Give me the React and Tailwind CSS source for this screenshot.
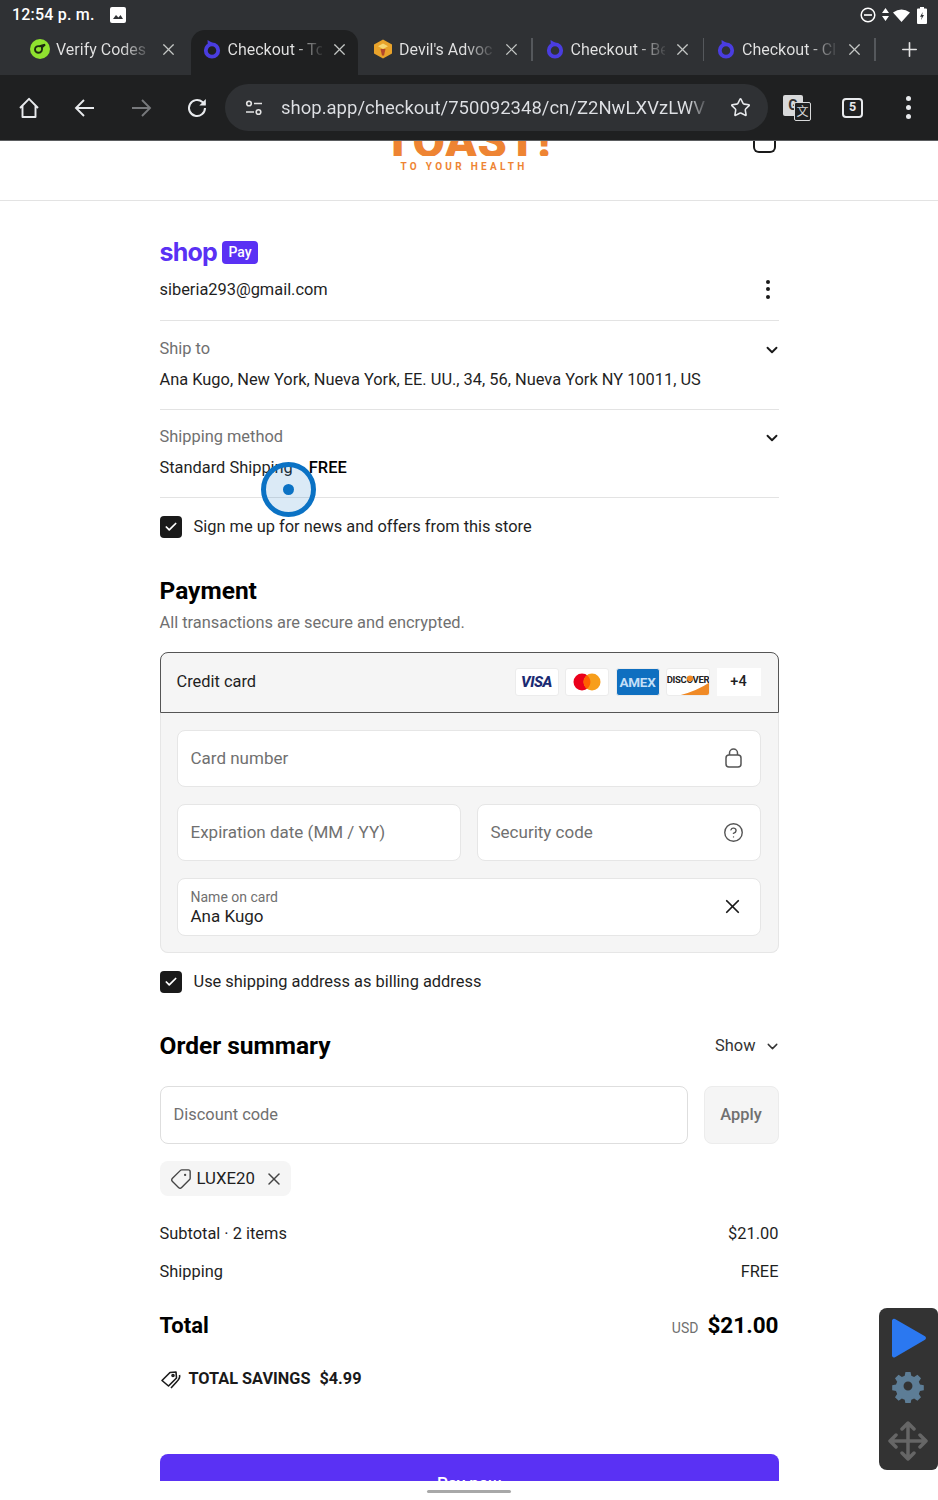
import { Check, ChevronDown, CircleHelp, Plus, Star, Tag, X } from 'lucide-react'

const tabs = [
  { title: 'Verify Codes', icon: 'verify' },
  { title: 'Checkout - To', icon: 'shop', active: true },
  { title: "Devil's Advoc", icon: 'devil' },
  { title: 'Checkout - Be', icon: 'shop', divider: true },
  { title: 'Checkout - Cl', icon: 'shop', divider: true },
]

function TabIcon({ type }) {
  if (type === 'verify') {
    return (
      <svg width="20" height="20" viewBox="0 0 20 20">
        <circle cx="10" cy="10" r="10" fill="#8fe22f" />
        <path d="M5 10.500c0-2.500 2-3.800 4.500-3.300l5.500-1.600-3.200 3c1 2-.4 5.200-3.300 5.200C6.500 13.800 5 12.400 5 10.500z" fill="none" stroke="#1c2a10" strokeWidth="1.900" />
      </svg>
    )
  }
  if (type === 'devil') {
    return (
      <svg width="20" height="20" viewBox="0 0 20 20">
        <path d="M10 .5l9 5v9l-9 5-9-5v-9z" fill="#e9a32b" />
        <path d="M10 4.500l5 2.800-5 2.800-5-2.800z" fill="#f7d774" />
        <path d="M7.500 10h5l-1.500 6.500H9z" fill="#b4472a" />
      </svg>
    )
  }
  return (
    <svg width="18" height="20" viewBox="0 0 18 20">
      <circle cx="9" cy="11.500" r="6.200" fill="none" stroke="#4a3de0" strokeWidth="3.800" />
      <path d="M4.500 1l6 3.500-5.500 4z" fill="#4a3de0" />
    </svg>
  )
}

function Tab({ tab }) {
  return (
    <div className="relative flex h-[45px] w-[171.500px] shrink-0 items-center pb-[7px] pl-[11px]">
      {tab.active && <div className="absolute bottom-0 left-0 right-[4.500px] top-0 rounded-t-[14px] bg-[#1f2021]" />}
      {tab.divider && <div className="absolute left-[-2.500px] top-[8px] h-[23px] w-[1.500px] bg-[#55585c]" />}
      <div className="relative flex w-[20px] justify-center">
        <TabIcon type={tab.icon} />
      </div>
      <div className="relative ml-[6px] mt-[2px] w-[94px] overflow-hidden whitespace-nowrap bg-gradient-to-r from-[#e3e3e3] from-[70%] to-[#e3e3e3]/10 bg-clip-text text-[16px] text-transparent">
        {tab.title}
      </div>
      <X size={19} strokeWidth={1.500} className="relative ml-[8.500px] text-[#c4c7c5]" />
    </div>
  )
}

function BrowserChrome() {
  return (
    <div className="bg-[#2f3134]">
      <div className="flex h-[30px] items-center justify-between pl-[12px] pr-[11px] text-white">
        <div className="flex items-center gap-[15px]">
          <span className="text-[16px] font-medium tracking-[0.2px]">12:54 p. m.</span>
          <svg width="16" height="16" viewBox="0 0 16 16">
            <rect width="16" height="16" rx="2" fill="#fff" />
            <path d="M3 12l3-4 2.500 2.500L10.500 8l2.500 4z" fill="#2f3134" />
          </svg>
        </div>
        <div className="flex items-center gap-[5px]">
          <svg width="16" height="16" viewBox="0 0 16 16" className="mr-[1px]">
            <circle cx="8" cy="8" r="6.800" fill="none" stroke="#fff" strokeWidth="1.500" />
            <rect x="4" y="7.200" width="8" height="1.600" fill="#fff" />
          </svg>
          <svg width="7" height="14" viewBox="0 0 7 14" className="-mr-[1px]">
            <path d="M3.500 0L7 5H0zM0 8h7l-3.500 5z" fill="#fff" />
          </svg>
          <svg width="17" height="13" viewBox="0 0 17 13">
            <path d="M0 3.500Q8.500-2.500 17 3.500L8.500 13z" fill="#fff" />
          </svg>
          <svg width="10" height="17" viewBox="0 0 10 17" className="ml-[2px]">
            <path d="M3 0h4v1.500h2a1 1 0 0 1 1 1V16a1 1 0 0 1-1 1H1a1 1 0 0 1-1-1V2.500a1 1 0 0 1 1-1h2z" fill="#fff" />
            <path d="M5.800 5L3 9.800h1.800L4 13l3-5H5.200z" fill="#2f3134" />
          </svg>
        </div>
      </div>
      <div className="flex h-[45px] pl-[19px]">
        {tabs.map((t) => (
          <Tab key={t.title} tab={t} />
        ))}
        <div className="relative w-[61px]">
          <div className="absolute left-[-2.500px] top-[8px] h-[23px] w-[1.500px] bg-[#55585c]" />
          <Plus size={23} strokeWidth={1.700} className="absolute left-[21px] top-[8px] text-[#e3e3e3]" />
        </div>
      </div>
      <div className="flex h-[66px] items-center border-b border-[#5b5d60] bg-[#1f2021]">
        <div className="flex w-[225px] items-center pl-[17px] text-[#e8eaed]">
          <svg width="24" height="24" viewBox="0 0 24 24" fill="none" stroke="currentColor" strokeWidth="1.900">
            <path d="M3 12L12 2.800 21 12M5.500 10v11h13V10" strokeLinejoin="round" />
          </svg>
          <svg width="24" height="24" viewBox="0 0 24 24" fill="none" stroke="currentColor" strokeWidth="1.900" className="ml-[32px]">
            <path d="M21 12H3.500M11 4l-8 8 8 8" />
          </svg>
          <svg width="24" height="24" viewBox="0 0 24 24" fill="none" stroke="#77797c" strokeWidth="1.900" className="ml-[32px]">
            <path d="M3 12h17.500M13 4l8 8-8 8" />
          </svg>
          <svg width="24" height="24" viewBox="0 0 24 24" fill="none" stroke="currentColor" strokeWidth="2" className="ml-[32px]">
            <path d="M20 12a8 8 0 1 1-2.600-5.900L20 8.500" />
            <path d="M20.800 3v6.500h-6.500z" fill="currentColor" stroke="none" />
          </svg>
        </div>
        <div className="flex h-[47px] w-[543px] items-center rounded-full bg-[#2f3134] pl-[20px]">
          <svg width="18" height="16" viewBox="0 0 18 16" fill="none" stroke="#e3e3e3" strokeWidth="1.600">
            <circle cx="4" cy="3.500" r="2.300" />
            <path d="M9 3.500h8M1 12h8" />
            <circle cx="13.500" cy="12" r="2.300" />
          </svg>
          <div className="ml-[18px] mt-[2px] w-[424px] overflow-hidden whitespace-nowrap bg-gradient-to-r from-[#dfe1e5] from-[96%] to-[#dfe1e5]/20 bg-clip-text text-[18.500px] text-transparent">
            shop.app/checkout/750092348/cn/Z2NwLXVzLWV
          </div>
          <Star size={21} strokeWidth={1.800} className="ml-[25px] text-[#e8eaed]" />
        </div>
        <div className="relative ml-[15px] h-[26px] w-[28px]">
          <div className="absolute left-0 top-0 flex h-[21px] w-[20px] items-center justify-center rounded-[2px] bg-[#d8d9da] text-[14px] font-bold text-[#333]">G</div>
          <div className="absolute bottom-0 right-0 flex h-[19px] w-[17px] items-center justify-center rounded-[2px] border border-[#d8d9da] bg-[#1f2021] font-['Noto_Sans_CJK_SC',sans-serif] text-[12px] leading-none text-[#d8d9da]">文</div>
        </div>
        <div className="ml-[31px] flex h-[20px] w-[21px] items-center justify-center rounded-[4px] border-2 border-[#e8eaed] text-[12.500px] font-bold text-[#e8eaed]">5</div>
        <div className="ml-[43px] flex flex-col gap-[4px]">
          <div className="size-[5px] rounded-full bg-[#e8eaed]" />
          <div className="size-[5px] rounded-full bg-[#e8eaed]" />
          <div className="size-[5px] rounded-full bg-[#e8eaed]" />
        </div>
      </div>
    </div>
  )
}

function Checkbox({ label }) {
  return (
    <div className="flex items-center gap-[12px]">
      <div className="flex size-[22px] items-center justify-center rounded-[4px] bg-[#1a1a1a]">
        <Check size={14} strokeWidth={3} className="text-white" />
      </div>
      <span className="text-[16.400px] text-[#1f1f1f]">{label}</span>
    </div>
  )
}

function CardLogo({ children, className = '' }) {
  return <div className={`flex h-[28px] w-[44px] items-center justify-center overflow-hidden rounded-[3px] border border-[#ececec] ${className}`}>{children}</div>
}

function CardLogos() {
  return (
    <div className="flex gap-[6.500px]">
      <CardLogo className="bg-white">
        <span className="text-[15px] font-extrabold italic tracking-[-0.5px] text-[#1a2a72]">VISA</span>
      </CardLogo>
      <CardLogo className="bg-white">
        <svg width="28" height="18" viewBox="0 0 28 18">
          <circle cx="9" cy="9" r="8.500" fill="#eb001b" />
          <circle cx="19" cy="9" r="8.500" fill="#f79e1b" />
          <path d="M14 2.200a8.500 8.500 0 0 1 0 13.600 8.500 8.500 0 0 1 0-13.600z" fill="#ff5f00" />
        </svg>
      </CardLogo>
      <CardLogo className="border-[#0f6fc0] bg-[#0f6fc0]">
        <span className="text-[13.500px] font-bold tracking-[-0.3px] text-[#c4dff7]">AMEX</span>
      </CardLogo>
      <CardLogo className="relative items-start bg-white">
        <span className="mt-[4px] text-[9.500px] font-bold tracking-[-0.3px] text-[#222]">DISCOVER</span>
        <svg width="44" height="28" viewBox="0 0 44 28" className="absolute inset-0">
          <path d="M10 27Q30 22 43 13V27z" fill="#f08a26" />
          <circle cx="23" cy="9.500" r="3" fill="#f08a26" />
        </svg>
      </CardLogo>
      <div className="flex h-[28px] w-[44px] items-center justify-center bg-white text-[14.500px] font-medium text-[#1f1f1f]">+4</div>
    </div>
  )
}

function Field({ label, children, className = '' }) {
  return (
    <div className={`flex h-[57px] items-center justify-between rounded-[8px] border border-[#e6e6e6] bg-white pl-[13px] pr-[16px] text-[17px] text-[#707070] ${className}`}>
      <span className="pt-[2px]">{label}</span>
      {children}
    </div>
  )
}

function Row({ left, right }) {
  return (
    <div className="flex items-center justify-between text-[16.400px] text-[#1f1f1f]">
      <span>{left}</span>
      <span>{right}</span>
    </div>
  )
}

export default function App() {
  return (
    <div className="relative h-[1500px] w-[938px] overflow-hidden bg-white font-['Roboto',sans-serif]">
      <BrowserChrome />

      {/* store header, scrolled off the top */}
      <div className="h-[60px] overflow-hidden border-b border-[#e3e3e3]">
        <div className="mx-auto flex h-[59px] w-[619px] items-end justify-between">
          <div className="w-[22px]" />
          <div className="flex flex-col items-center pb-[28px]">
            <div className="h-[15px] overflow-hidden">
              <div className="-mt-[20px] text-[47px] font-black leading-[40px] tracking-[0.5px] text-[#ee8433]">TOAST!</div>
            </div>
            <div className="mr-[6px] mt-[5px] text-[10px] font-bold leading-[11px] tracking-[3.300px] text-[#ee8433]">TO YOUR HEALTH</div>
          </div>
          <div className="mb-[47px] mr-[3px] h-[12px] w-[23px] rounded-b-[6px] border-2 border-t-0 border-[#1a1a1a]" />
        </div>
      </div>

      <div className="mx-auto w-[619px]">
        <div className="mt-[35px] flex h-[32px] items-center gap-[5px]">
          <span className="font-['Inter',sans-serif] text-[25px] font-bold leading-none tracking-[-0.8px] text-[#5a31f4]">shop</span>
          <span className="mt-[1px] flex h-[23px] w-[36px] items-center justify-center rounded-[4px] bg-[#5a31f4] text-[14px] font-medium text-white">Pay</span>
        </div>

        <div className="mt-[7px] flex h-[30px] items-center justify-between text-[16.400px] text-[#1f1f1f]">
          <span>siberia293@gmail.com</span>
          <div className="-mt-[2px] mr-[9px] flex flex-col gap-[3.500px]">
            <div className="size-[4px] rounded-full bg-[#1a1a1a]" />
            <div className="size-[4px] rounded-full bg-[#1a1a1a]" />
            <div className="size-[4px] rounded-full bg-[#1a1a1a]" />
          </div>
        </div>

        <div className="mt-[15px] border-t border-[#e3e3e3]">
          <div className="mt-[18px] flex h-[20px] items-center justify-between text-[16.400px] text-[#707070]">
            <span>Ship to</span>
            <ChevronDown size={18} strokeWidth={2.500} className="-mr-[2.500px] mt-[2px] text-[#1a1a1a]" />
          </div>
          <div className="mt-[11px] text-[16.400px] leading-[20px] text-[#1f1f1f]">
            Ana Kugo, New York, Nueva York, EE. UU., 34, 56, Nueva York NY 10011, US
          </div>
        </div>

        <div className="mt-[19px] border-t border-[#e3e3e3]">
          <div className="mt-[17px] flex h-[20px] items-center justify-between text-[16.400px] text-[#707070]">
            <span>Shipping method</span>
            <ChevronDown size={18} strokeWidth={2.500} className="-mr-[2.500px] mt-[2px] text-[#1a1a1a]" />
          </div>
          <div className="mt-[11px] flex gap-[16px] text-[16.400px] leading-[20px] text-[#1f1f1f]">
            <span>Standard Shipping</span>
            <span className="font-medium text-black">FREE</span>
          </div>
        </div>

        <div className="mt-[19px] border-t border-[#e3e3e3] pt-[17px]">
          <Checkbox label="Sign me up for news and offers from this store" />
        </div>

        <h2 className="mt-[36px] text-[24.500px] font-bold leading-[30px] text-black">Payment</h2>
        <p className="mt-[7px] text-[16.400px] leading-[20px] text-[#707070]">All transactions are secure and encrypted.</p>

        <div className="mt-[19px] rounded-[8px] bg-[#f5f5f5]">
          <div className="flex h-[61px] items-center justify-between rounded-t-[8px] border border-[#555] pl-[16px] pr-[17px]">
            <span className="text-[16.400px] text-[#1f1f1f]">Credit card</span>
            <CardLogos />
          </div>
          <div className="flex flex-col gap-[17px] rounded-b-[8px] border border-t-0 border-[#e6e6e6] pb-[16px] pl-[16px] pr-[17px] pt-[17px]">
            <Field label="Card number">
              <svg width="17" height="20" viewBox="0 0 17 20" fill="none" stroke="#555" strokeWidth="1.500" className="mr-[2px]">
                <rect x="1" y="7" width="15" height="12" rx="3" />
                <path d="M4.500 7V5a4 4 0 0 1 8 0v2" />
              </svg>
            </Field>
            <div className="flex gap-[16px]">
              <Field label="Expiration date (MM / YY)" className="flex-1" />
              <Field label="Security code" className="flex-1">
                <CircleHelp size={21} strokeWidth={1.600} className="text-[#555]" />
              </Field>
            </div>
            <div className="flex h-[58px] items-center justify-between rounded-[8px] border border-[#e6e6e6] bg-white pl-[13px] pr-[16px]">
              <div className="pt-[1px]">
                <div className="text-[14px] leading-[16px] text-[#707070]">Name on card</div>
                <div className="mt-[1px] text-[17px] leading-[20px] text-[#1f1f1f]">Ana Kugo</div>
              </div>
              <X size={23} strokeWidth={1.800} className="text-[#1a1a1a]" />
            </div>
          </div>
        </div>

        <div className="mt-[17px]">
          <Checkbox label="Use shipping address as billing address" />
        </div>

        <div className="mt-[37px] flex h-[30px] items-center justify-between">
          <h2 className="text-[24.500px] font-bold text-black">Order summary</h2>
          <div className="flex items-center gap-[8px] text-[16.400px] text-[#333]">
            Show
            <ChevronDown size={17} strokeWidth={2} className="-mr-[2px] text-[#333]" />
          </div>
        </div>

        <div className="mt-[25px] flex gap-[16px]">
          <div className="flex h-[58px] flex-1 items-center rounded-[8px] border border-[#dedede] pl-[13px] text-[16.400px] text-[#707070]">Discount code</div>
          <div className="flex h-[58px] w-[75px] items-center justify-center rounded-[8px] border border-[#ececec] bg-[#f5f5f5] text-[16.400px] font-medium text-[#707070]">Apply</div>
        </div>

        <div className="mt-[17px] flex h-[35px] w-[131px] items-center rounded-[8px] bg-[#f5f5f5] pl-[10px] text-[16.800px] text-[#1f1f1f]">
          <Tag size={22} strokeWidth={1.500} className="-scale-x-100 text-[#444]" />
          <span className="ml-[5px]">LUXE20</span>
          <X size={20} strokeWidth={1.800} className="ml-[9px] text-[#444]" />
        </div>

        <div className="mt-[26px]">
          <Row left="Subtotal · 2 items" right="$21.00" />
        </div>
        <div className="mt-[13px]">
          <Row left="Shipping" right="FREE" />
        </div>

        <div className="mt-[26px] flex h-[30px] items-center justify-between">
          <span className="text-[22px] font-bold text-black">Total</span>
          <div className="flex items-baseline gap-[9px]">
            <span className="text-[14px] text-[#707070]">USD</span>
            <span className="text-[22.500px] font-bold text-black">$21.00</span>
          </div>
        </div>

        <div className="mt-[27px] flex items-center text-[16.300px] font-bold text-[#1a1a1a]">
          <svg width="22" height="20" viewBox="0 0 22 20" fill="none" stroke="#1a1a1a" strokeWidth="1.600" strokeLinejoin="round">
            <path d="M2 10.500L10 2.500l6-.5.500 6-8 8z" />
            <circle cx="13" cy="5.500" r="1" />
            <path d="M19.500 5c1 3-1 5-3 7l-5.500 6" />
          </svg>
          <span className="ml-[7px]">TOTAL SAVINGS</span>
          <span className="ml-[9px]">$4.99</span>
        </div>

        <div className="mt-[62px] h-[27px] overflow-hidden rounded-t-[8px] bg-[#5a31f4] pt-[19px] text-center text-[17px] font-medium leading-[20px] text-white">Pay now</div>
      </div>

      <div className="mx-auto mt-[9px] h-[3px] w-[84px] rounded-full bg-[#a8a8a8]" />

      {/* touch indicator */}
      <div className="absolute left-[261px] top-[462px] flex size-[55px] items-center justify-center rounded-full border-[5px] border-[#0b72c4] bg-[#0b72c4]/15">
        <div className="size-[11px] rounded-full bg-[#0b72c4]" />
      </div>

      {/* floating recorder widget */}
      <div className="absolute left-[879px] top-[1308px] flex h-[162px] w-[59px] flex-col items-center rounded-l-[8px] rounded-r-[6px] bg-[#333333] pr-[1px] pt-[9px]">
        <svg width="38" height="42" viewBox="0 0 38 42">
          <path d="M3 3.500v35a2 2 0 0 0 3 1.700l30-17.500a2 2 0 0 0 0-3.400L6 2a2 2 0 0 0-3 1.500z" fill="#2b78f0" />
        </svg>
        <svg width="34" height="34" viewBox="0 0 24 24" className="mt-[10px]">
          <path fillRule="evenodd" fill="#5d7d96" d="M10 1h4l.6 3 2.200.9 2.600-1.700 2.800 2.800-1.700 2.600.9 2.200 3 .6v4l-3 .6-.9 2.200 1.700 2.600-2.800 2.800-2.600-1.700-2.200.9-.6 3h-4l-.6-3-2.200-.9-2.600 1.700-2.800-2.800 1.700-2.600-.9-2.200-3-.6v-4l3-.6.9-2.200-1.700-2.600L4.600 3.200l2.600 1.700L9.400 4zM12 8.500a3.500 3.500 0 1 0 0 7 3.500 3.500 0 0 0 0-7z" transform="translate(1.200 1.200) scale(.9)" />
        </svg>
        <svg width="40" height="40" viewBox="0 0 40 40" fill="none" stroke="#666" strokeWidth="3.500" strokeLinecap="round" strokeLinejoin="round" className="mt-[18px]">
          <path d="M20 2v36M2 20h36M14 8l6-6 6 6M14 32l6 6 6-6M8 14l-6 6 6 6M32 14l6 6-6 6" />
        </svg>
      </div>
    </div>
  )
}
